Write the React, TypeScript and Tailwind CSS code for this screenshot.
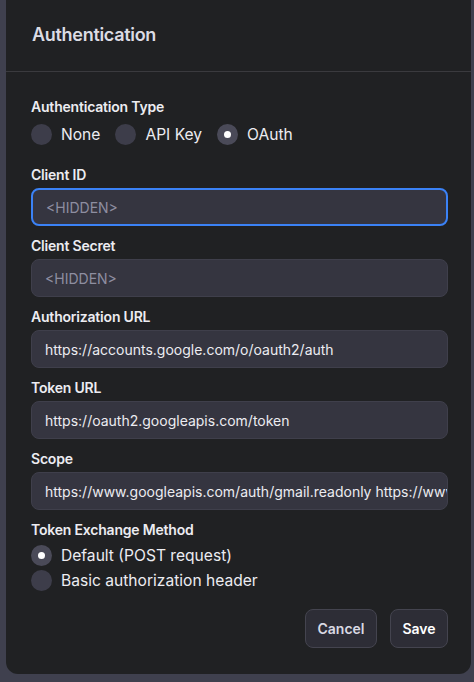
import React from "react";

const font = { fontFamily: "Inter, 'Noto Sans', sans-serif" };

function Radio({ checked, label }: { checked?: boolean; label: string }) {
  return (
    <div className="flex items-center h-[25px]">
      <span
        className={
          "w-[21px] h-[21px] rounded-full flex items-center justify-center " +
          (checked ? "bg-[#4a4a58]" : "bg-[#3d3d4a]")
        }
      >
        {checked && <span className="w-[7px] h-[7px] rounded-full bg-white" />}
      </span>
      <span className="ml-[9px] text-[15.6px] text-[#ececf1] leading-none">{label}</span>
    </div>
  );
}

function Field({
  label,
  value,
  placeholder,
  focused,
}: {
  label: string;
  value?: string;
  placeholder?: string;
  focused?: boolean;
}) {
  return (
    <div className="flex flex-col">
      <div className="h-[20px] leading-[20px] text-[14px] font-semibold text-[#ececf1] tracking-[-0.2px]">
        {label}
      </div>
      <div
        className={
          "mt-[3px] h-[38px] rounded-[8px] bg-[#353540] flex items-center px-[13px] overflow-hidden whitespace-nowrap text-[14px] " +
          (focused ? "border-2 border-[#3b82f6] px-[12px]" : "border border-[#3f3f4b]")
        }
      >
        {value ? (
          <span className="text-[#ececf1]">{value}</span>
        ) : (
          <span className="text-[#8e8ea0]">{placeholder}</span>
        )}
      </div>
    </div>
  );
}

export default function App() {
  return (
    <div className="w-[474px] h-[682px] bg-[#3f404e] overflow-hidden" style={font}>
      <div className="ml-[6px] w-[465px] h-[674px] bg-[#202123] rounded-b-[12px] flex flex-col">
        <div className="h-[72px] border-b border-[#3a3a3e] flex items-center pl-[26px] pb-[2px]">
          <div className="text-[18px] font-semibold text-[#dcdce4] tracking-[-0.3px]">Authentication</div>
        </div>
        <div className="pl-[25px] pr-[23px] pt-[25px] flex flex-col">
          <div className="h-[20px] leading-[20px] text-[14px] font-semibold text-[#ececf1] tracking-[-0.2px]">
            Authentication Type
          </div>
          <div className="mt-[5px] flex items-center gap-[15px]">
            <Radio label="None" />
            <Radio label="API Key" />
            <Radio checked label="OAuth" />
          </div>
          <div className="mt-[18px] flex flex-col gap-[10px]">
            <Field label="Client ID" placeholder="<HIDDEN>" focused />
            <Field label="Client Secret" placeholder="<HIDDEN>" />
            <Field label="Authorization URL" value="https://accounts.google.com/o/oauth2/auth" />
            <Field label="Token URL" value="https://oauth2.googleapis.com/token" />
            <Field
              label="Scope"
              value="https://www.googleapis.com/auth/gmail.readonly https://www.googleapis.com/auth/gmail.send"
            />
          </div>
          <div className="mt-[10px] h-[20px] leading-[20px] text-[14px] font-semibold text-[#ececf1] tracking-[-0.2px]">
            Token Exchange Method
          </div>
          <div className="mt-[3px] flex flex-col">
            <Radio checked label="Default (POST request)" />
            <Radio label="Basic authorization header" />
          </div>
          <div className="mt-[16px] flex justify-end gap-[13px]">
            <button className="h-[39px] w-[72px] rounded-[8px] bg-[#2d2d36] border border-[#44444f] text-[14px] font-semibold text-[#d9d9e3]">
              Cancel
            </button>
            <button className="h-[39px] w-[58px] rounded-[8px] bg-[#2d2d36] border border-[#44444f] text-[14px] font-semibold text-white">
              Save
            </button>
          </div>
        </div>
      </div>
    </div>
  );
}
